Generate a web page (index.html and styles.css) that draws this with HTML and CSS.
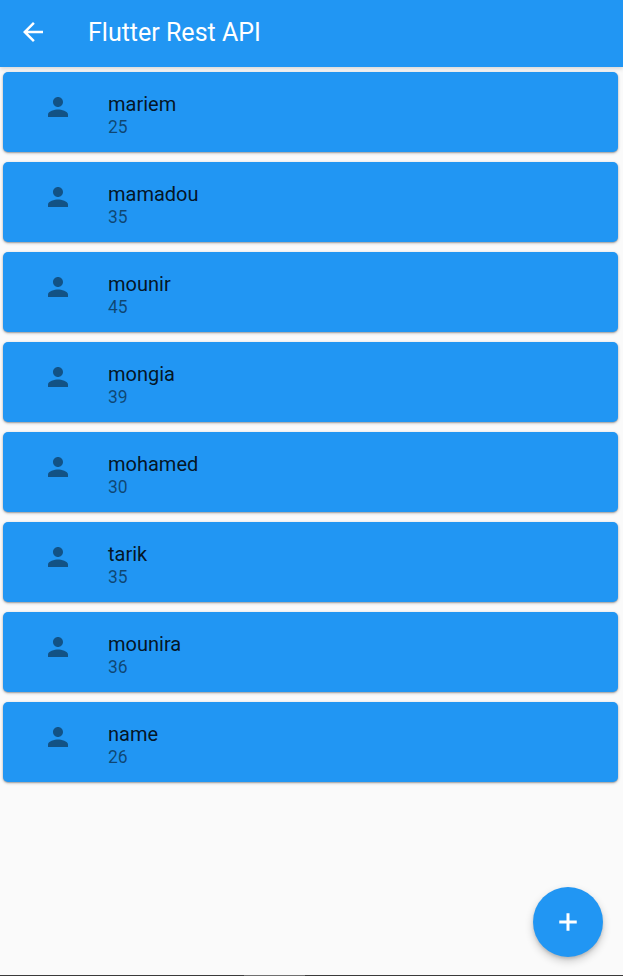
FILE: index.html
```html
<!DOCTYPE html>
<html lang="en">
<head>
<meta charset="utf-8">
<title>Flutter Rest API</title>
<link rel="stylesheet" href="styles.css">
</head>
<body>
<div class="screen">
  <header class="appbar">
    <svg class="back" viewBox="0 0 24 24"><path d="M20 11H7.83l5.59-5.59L12 4l-8 8 8 8 1.41-1.41L7.83 13H20v-2z"/></svg>
    <h1 class="appbar-title">Flutter Rest API</h1>
  </header>
  <main class="list">
    <article class="card"><svg class="person" viewBox="0 0 24 24"><path d="M12 12c2.21 0 4-1.79 4-4s-1.79-4-4-4-4 1.79-4 4 1.79 4 4 4zm0 2c-2.67 0-8 1.34-8 4v2h16v-2c0-2.66-5.33-4-8-4z"/></svg><div class="text"><div class="name">mariem</div><div class="age">25</div></div></article>
    <article class="card"><svg class="person" viewBox="0 0 24 24"><path d="M12 12c2.21 0 4-1.79 4-4s-1.79-4-4-4-4 1.79-4 4 1.79 4 4 4zm0 2c-2.67 0-8 1.34-8 4v2h16v-2c0-2.66-5.33-4-8-4z"/></svg><div class="text"><div class="name">mamadou</div><div class="age">35</div></div></article>
    <article class="card"><svg class="person" viewBox="0 0 24 24"><path d="M12 12c2.21 0 4-1.79 4-4s-1.79-4-4-4-4 1.79-4 4 1.79 4 4 4zm0 2c-2.67 0-8 1.34-8 4v2h16v-2c0-2.66-5.33-4-8-4z"/></svg><div class="text"><div class="name">mounir</div><div class="age">45</div></div></article>
    <article class="card"><svg class="person" viewBox="0 0 24 24"><path d="M12 12c2.21 0 4-1.79 4-4s-1.79-4-4-4-4 1.79-4 4 1.79 4 4 4zm0 2c-2.67 0-8 1.34-8 4v2h16v-2c0-2.66-5.33-4-8-4z"/></svg><div class="text"><div class="name">mongia</div><div class="age">39</div></div></article>
    <article class="card"><svg class="person" viewBox="0 0 24 24"><path d="M12 12c2.21 0 4-1.79 4-4s-1.79-4-4-4-4 1.79-4 4 1.79 4 4 4zm0 2c-2.67 0-8 1.34-8 4v2h16v-2c0-2.66-5.33-4-8-4z"/></svg><div class="text"><div class="name">mohamed</div><div class="age">30</div></div></article>
    <article class="card"><svg class="person" viewBox="0 0 24 24"><path d="M12 12c2.21 0 4-1.79 4-4s-1.79-4-4-4-4 1.79-4 4 1.79 4 4 4zm0 2c-2.67 0-8 1.34-8 4v2h16v-2c0-2.66-5.33-4-8-4z"/></svg><div class="text"><div class="name">tarik</div><div class="age">35</div></div></article>
    <article class="card"><svg class="person" viewBox="0 0 24 24"><path d="M12 12c2.21 0 4-1.79 4-4s-1.79-4-4-4-4 1.79-4 4 1.79 4 4 4zm0 2c-2.67 0-8 1.34-8 4v2h16v-2c0-2.66-5.33-4-8-4z"/></svg><div class="text"><div class="name">mounira</div><div class="age">36</div></div></article>
    <article class="card"><svg class="person" viewBox="0 0 24 24"><path d="M12 12c2.21 0 4-1.79 4-4s-1.79-4-4-4-4 1.79-4 4 1.79 4 4 4zm0 2c-2.67 0-8 1.34-8 4v2h16v-2c0-2.66-5.33-4-8-4z"/></svg><div class="text"><div class="name">name</div><div class="age">26</div></div></article>
  </main>
  <button class="fab" aria-label="Add"><svg class="plus" viewBox="0 0 24 24"><path d="M19 13.2h-5.8V19h-2.4v-5.8H5v-2.4h5.8V5h2.4v5.8H19v2.4z"/></svg></button>
  <footer class="navline"><span class="navhandle"></span></footer>
</div>
</body>
</html>
```
FILE: styles.css
```css
* { box-sizing: border-box; }
html, body { margin: 0; height: 100%; }
body { background: #fafafa; font-family: Roboto, sans-serif; overflow: hidden; }
.screen { position: relative; height: 976px; display: flex; flex-direction: column; }
.appbar {
  height: 67px; flex: none; background: #2196f3; display: flex; align-items: center;
  padding: 0 0 3px 18px; gap: 40px; color: #fff; position: relative; z-index: 1;
  box-shadow: 0 2px 4px rgba(0,0,0,.14);
}
.back { width: 30px; height: 30px; fill: #fff; flex: none; }
.appbar-title { margin: 2px 0 0; font-size: 25px; font-weight: 400; line-height: 32px; }
.list { flex: 1; display: flex; flex-direction: column; gap: 10px; padding: 5px 5px 0 3px; }
.card {
  height: 80px; background: #2196f3; border-radius: 5px; display: flex; align-items: center;
  padding: 0 0 0 40px; gap: 35px;
  box-shadow: 0 1px 3px rgba(0,0,0,.3), 0 1px 1px rgba(0,0,0,.14);
}
.person { width: 30px; height: 30px; fill: rgba(0,0,0,.45); flex: none; margin-bottom: 10px; }
.text { display: flex; flex-direction: column; margin-top: 5px; }
.name { font-size: 20px; line-height: 24px; color: rgba(0,0,0,.87); }
.age { font-size: 17.5px; line-height: 22px; color: rgba(0,0,0,.54); }
.fab {
  position: absolute; right: 20px; bottom: 19px; width: 70px; height: 70px; border: 0; padding: 0;
  border-radius: 50%; background: #2196f3; display: flex; align-items: center; justify-content: center;
  box-shadow: 0 4px 8px rgba(0,0,0,.2), 0 2px 3px rgba(0,0,0,.12);
}
.plus { width: 30px; height: 30px; fill: #fff; }
.navline { height: 1px; flex: none; background: #3a3a3a; display: flex; padding-left: 244px; }
.navhandle { width: 61px; height: 1px; background: #6f6f6f; }
```
